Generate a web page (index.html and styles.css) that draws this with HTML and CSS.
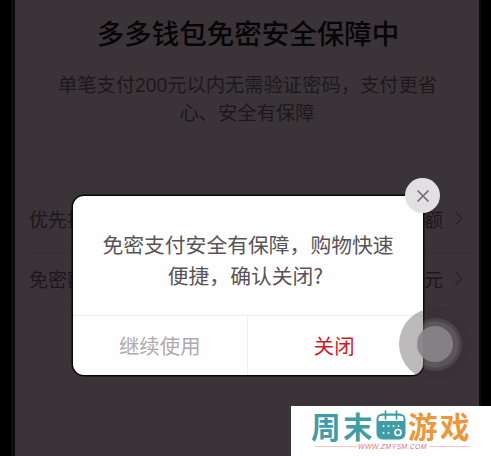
FILE: index.html
```html
<!DOCTYPE html>
<html lang="zh-CN">
<head>
<meta charset="utf-8">
<title>多多钱包</title>
<link rel="stylesheet" href="styles.css">
</head>
<body>
<div class="screen">
  <main class="page">
    <h1 class="title">多多钱包免密安全保障中</h1>
    <p class="subtitle">单笔支付200元以内无需验证密码，支付更省<br>心、安全有保障</p>
    <div class="list">
      <div class="row"><span>优先扣</span><span class="value">额<svg class="chevron" viewBox="0 0 10 18"><path d="M1.500 1.500L8.500 9L1.500 16.500"/></svg></span></div>
      <div class="row"><span>免密额</span><span class="value">元<svg class="chevron" viewBox="0 0 10 18"><path d="M1.500 1.500L8.500 9L1.500 16.500"/></svg></span></div>
    </div>
  </main>
</div>
<section class="dialog">
  <p class="message">免密支付安全有保障，购物快速<br><span class="last-line">便捷，确认关闭?</span></p>
  <div class="actions">
    <div class="action keep">继续使用</div>
    <div class="action close">关闭</div>
  </div>
  <div class="dismiss"><svg viewBox="0 0 12 12"><path d="M0.500 0.500L11.500 11.500M11.500 0.500L0.500 11.500"/></svg></div>
</section>
<div class="touch"><div class="touch-ring"><div class="touch-core"></div></div></div>
<div class="brand">
  <div class="logo">
    <span class="word teal">周末</span>
    <svg class="calendar" viewBox="0 0 30 30">
      <rect x="0.500" y="3.500" width="29" height="26" rx="6" fill="#419da5"/>
      <path d="M2.500 11V9Q2.500 5.700 6 5.700H24Q27.500 5.700 27.500 9V11Z" fill="#fff"/>
      <path d="M9.500 1V9M20.500 1V9" stroke="#419da5" stroke-width="1.700" stroke-linecap="round"/>
      <g fill="#e8f6f6"><circle cx="7.500" cy="16" r="1"/><circle cx="12.500" cy="16" r="1"/><circle cx="17.500" cy="16" r="1"/><circle cx="22.500" cy="16" r="1"/><circle cx="7.500" cy="23" r="1"/><circle cx="12.500" cy="23" r="1"/></g>
      <circle cx="22" cy="22.500" r="3" fill="none" stroke="#fff" stroke-width="1.700"/>
    </svg>
    <span class="word orange">游戏</span>
  </div>
  <div class="site"><span class="rule"></span><span class="url">WWW.ZMYSM.COM</span><span class="rule"></span></div>
</div>
</body>
</html>
```
FILE: styles.css
```css
* { box-sizing: border-box; }
body {
  margin: 0;
  width: 491px;
  height: 456px;
  overflow: hidden;
  position: relative;
  background: #000;
  font-family: "Noto Sans CJK SC", sans-serif;
}
h1, p { margin: 0; }
.screen {
  height: 456px;
  margin: 0 10px 0 11px;
  padding: 0 0 0 2px;
  background: #0e0d0e;
}
.page {
  height: 456px;
  margin: 0 2px;
  padding-top: 12px;
  background: #3a3439;
}
.title {
  font-size: 27.5px;
  line-height: 40px;
  font-weight: 500;
  text-align: center;
  text-indent: 2px;
  color: #070507;
  white-space: nowrap;
}
.subtitle {
  margin-top: 20px;
  font-family: "Liberation Sans", "Noto Sans CJK SC", sans-serif;
  font-size: 19.3px;
  line-height: 28px;
  text-align: center;
  text-indent: 1px;
  color: #1d181c;
  white-space: nowrap;
}
.list {
  margin: 60px 8px 0 14px;
  border-top: 1px solid #353034;
}
.row {
  display: flex;
  justify-content: space-between;
  align-items: center;
  height: 60px;
  padding-right: 8px;
  border-bottom: 1px solid #353034;
  font-size: 19px;
  color: #1c171b;
}
.value { display: flex; align-items: center; gap: 11px; }
.chevron {
  width: 9px;
  height: 17px;
  fill: none;
  stroke: #292428;
  stroke-width: 1.5;
}
.dialog {
  position: absolute;
  left: 73px;
  top: 196px;
  width: 350px;
  height: 179px;
  border-radius: 11px;
  background: #fefefe;
  box-shadow: 0 0 0 1.5px #080608;
}
.message {
  height: 119px;
  padding-top: 33px;
  font-size: 20.8px;
  line-height: 31px;
  text-align: center;
  color: #5a5459;
  white-space: nowrap;
}
.last-line { padding-right: 5px; }
.actions {
  display: flex;
  height: 60px;
  border-top: 1px solid #efedef;
}
.action {
  flex: 1;
  text-align: center;
  font-size: 20.4px;
  line-height: 58px;
}
.keep { color: #b0a9ae; border-right: 1px solid #f0eef0; }
.close { color: #cc1c2b; padding-right: 2px; }
.dismiss {
  position: absolute;
  left: 332px;
  top: -18px;
  width: 35px;
  height: 35px;
  border-radius: 50%;
  background: #e3e0e3;
  display: flex;
  align-items: center;
  justify-content: center;
}
.dismiss svg {
  width: 12px;
  height: 12px;
  overflow: visible;
  fill: none;
  stroke: #716c70;
  stroke-width: 1.6;
}
.touch {
  position: absolute;
  left: 399px;
  top: 308px;
  width: 72px;
  height: 72px;
  border-radius: 50%;
  background: rgba(54, 49, 53, .33);
  display: flex;
  align-items: center;
  justify-content: center;
}
.touch-ring {
  width: 53px;
  height: 53px;
  border-radius: 50%;
  background: radial-gradient(circle, rgba(185, 180, 184, .28) 22px, rgba(185, 180, 184, .16) 24px, rgba(185, 180, 184, .11) 27px);
  display: flex;
  align-items: center;
  justify-content: center;
}
.touch-core {
  width: 36px;
  height: 36px;
  border-radius: 50%;
  background: rgba(136, 131, 135, .92);
}
.brand {
  position: absolute;
  left: 291px;
  top: 406px;
  width: 200px;
  height: 50px;
  padding-top: 4px;
  background: #fff;
}
.logo {
  display: flex;
  align-items: center;
  height: 30px;
  padding-left: 20px;
}
.word {
  font-size: 29.5px;
  line-height: 30px;
  font-weight: 700;
  letter-spacing: 2.5px;
  width: 64px;
  white-space: nowrap;
}
.teal { color: #419da5; }
.orange { color: #ec973b; margin-left: 2px; }
.calendar {
  width: 30px;
  height: 30px;
  margin-left: 1px;
  flex: none;
}
.site {
  display: flex;
  align-items: center;
  height: 13px;
  margin: 0 21px 0 24px;
}
.rule { flex: 1; height: 1px; background: #f3c5c4; }
.url {
  width: 72px;
  text-align: center;
  font-family: "Liberation Sans", sans-serif;
  font-size: 7px;
  font-style: italic;
  line-height: 10px;
  letter-spacing: .3px;
  white-space: nowrap;
  color: #dc7676;
}
```
